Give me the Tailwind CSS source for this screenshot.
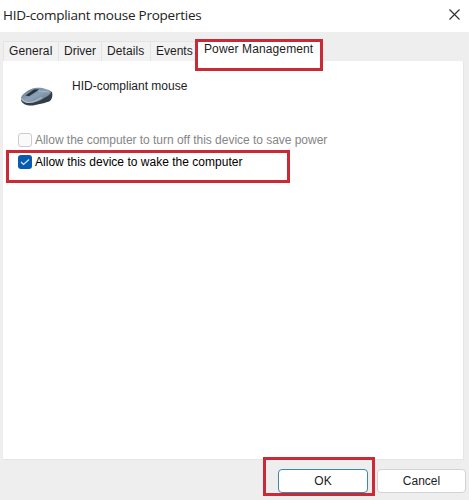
<!DOCTYPE html>
<html lang="en">
<head>
    <meta charset="UTF-8">
    <meta name="viewport" content="width=device-width, initial-scale=1.0">
    <title>HID-compliant mouse Properties</title>
    <script src="https://cdn.jsdelivr.net/npm/@tailwindcss/browser@4"></script>
</head>
<body class="bg-[#eeeeee] overflow-hidden">
    <div class="relative flex flex-col w-[469px] h-[500px] bg-[#eeeeee] font-['Liberation_Sans',Arial,sans-serif] text-[12px] leading-[14px] text-[#1c1c1c] whitespace-nowrap">
        <!-- Title bar -->
        <header class="flex items-center justify-between h-8 shrink-0 bg-white pl-[3px] pr-[9px]">
            <h1 class="font-['Open_Sans','Noto_Sans',sans-serif] text-[13.5px] leading-4 tracking-[-0.25px] -mt-[3px] text-[#222]">HID-compliant mouse Properties</h1>
            <svg class="size-[11px] -mt-[3px]" viewBox="0 0 11 11" fill="none" stroke="#333" stroke-width="1.2">
                <path d="M.5.5l10 10M10.5.5l-10 10"/>
            </svg>
        </header>

        <!-- Tabs -->
        <nav class="flex items-end h-[29px] shrink-0 pl-[3px]">
            <div class="w-[55px] h-5 pt-[2px] pl-[5px] bg-[#f2f2f2] border border-r-0 border-b-0 border-[#e4e4e4] tracking-[0.1px]">General</div>
            <div class="w-[43px] h-5 pt-[2px] pl-[5px] bg-[#f2f2f2] border border-r-0 border-b-0 border-[#e4e4e4]">Driver</div>
            <div class="w-[49px] h-5 pt-[2px] pl-[5px] bg-[#f2f2f2] border border-r-0 border-b-0 border-[#e4e4e4] tracking-[0.1px]">Details</div>
            <div class="w-[46px] h-5 pt-[2px] pl-[5px] bg-[#f2f2f2] border border-r-0 border-b-0 border-[#e4e4e4]">Events</div>
            <div class="w-[127px] h-[21px] pt-[2px] pl-[8px] bg-white tracking-[0.12px]">Power Management</div>
        </nav>

        <!-- Power management page -->
        <main class="w-[461px] h-[399px] shrink-0 ml-[3px] bg-white border-b border-r border-[#e5e5e5]">
            <div class="flex h-[32px] pt-[18px] pl-[17px]">
                <svg class="w-[33px] h-[21px] mt-[7px]" viewBox="0 0 33 21">
                    <defs>
                        <linearGradient id="shell" x1="0" y1="0" x2="1" y2="1">
                            <stop offset="0" stop-color="#5d7286"/>
                            <stop offset=".5" stop-color="#8da2b6"/>
                            <stop offset="1" stop-color="#5b6f81"/>
                        </linearGradient>
                    </defs>
                    <path d="M1 14C2 18 7 20 13 19.5 19 18 26 17 30 15 32 13 33 10 32 6L28 4 2 11z" fill="#333d46"/>
                    <path d="M1 13C0 9 9 3 15 2 21 1 29 3 31 6 31 9 26 11 20 14.500 13 18 3 18 1 13z" fill="url(#shell)"/>
                    <path d="M1.500 12.500C4 17 11 17.500 16 14.500L22 11.500" fill="none" stroke="#adbdcc" stroke-width="1.200"/>
                    <path d="M5.500 9.500L14 3.500 19 3.200 17 5 9 10.200z" fill="#26323d"/>
                    <path d="M18 5L29 6" stroke="#a4b7ca" stroke-width="1"/>
                </svg>
                <span class="ml-[19px]">HID-compliant mouse</span>
            </div>
            <div class="flex items-center h-4 mt-[39px] pl-[15px] text-[#858585]">
                <span class="size-[14px] rounded-[3px] bg-[#fafafa] border border-[#cccccc]"></span>
                <span class="ml-[3px] tracking-[-0.03px]">Allow the computer to turn off this device to save power</span>
            </div>
            <div class="flex items-center h-4 mt-[6px] pl-[15px] text-black">
                <span class="flex items-center justify-center size-[14px] rounded-[3px] bg-[#075caf]">
                    <svg class="size-[10px]" viewBox="0 0 10 10" fill="none" stroke="#d8eaff" stroke-width="1.2">
                        <path d="M1 5l2.5 2.5L9 2.5"/>
                    </svg>
                </span>
                <span class="ml-[3px] tracking-[0.02px]">Allow this device to wake the computer</span>
            </div>
        </main>

        <footer class="flex gap-[9px] mt-[9px] pl-[278px]">
            <button class="w-[90px] h-6 rounded-[4px] bg-white border border-[#3c87ad]">OK</button>
            <button class="w-[89px] h-6 rounded-[4px] bg-white border border-[#d3d3d3]">Cancel</button>
        </footer>

        <!-- Highlight boxes -->
        <div class="absolute left-[195px] top-[39px] w-[128px] h-[32px] border-[3px] border-[#c92a36]"></div>
        <div class="absolute left-[6px] top-[150px] w-[284px] h-[33px] border-[3px] border-[#c92a36]"></div>
        <div class="absolute left-[263px] top-[457px] w-[112px] h-[39px] border-[3px] border-[#c92a36]"></div>
    </div>
</body>
</html>
